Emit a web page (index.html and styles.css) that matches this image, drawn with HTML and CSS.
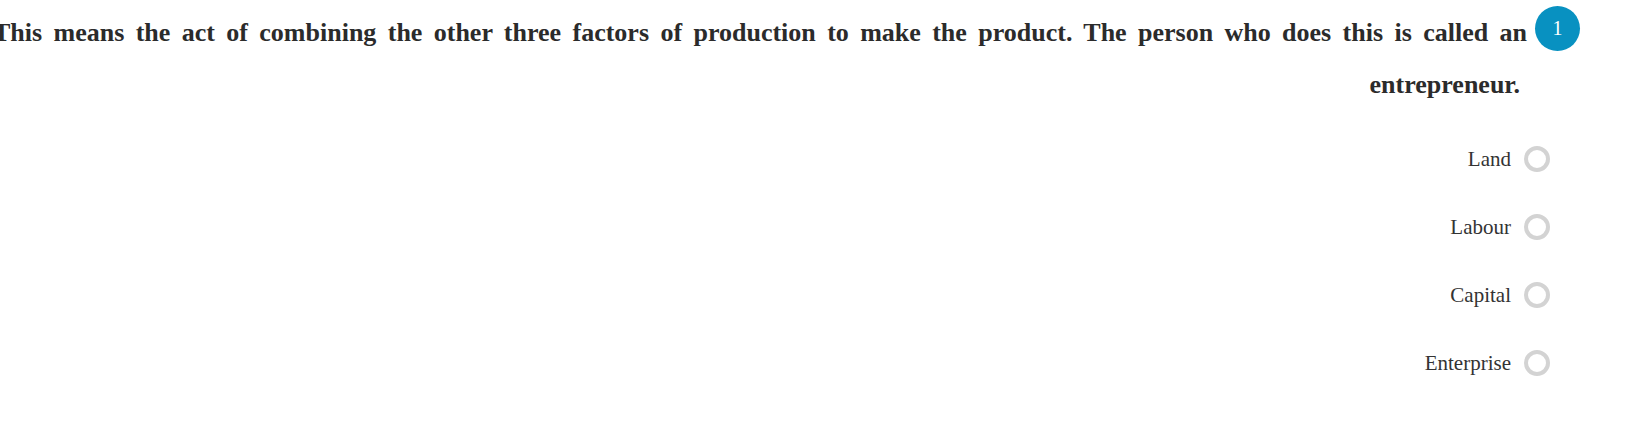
FILE: index.html
```html
<!DOCTYPE html>
<html lang="en">
<head>
<meta charset="utf-8">
<title>Question 1</title>
<link rel="stylesheet" href="styles.css">
</head>
<body>
<div class="question">
  <div class="q-head">
    <p class="q-text">This means the act of combining the other three factors of production to make the product. The person who does this is called an <span class="q-end">entrepreneur.</span></p>
    <span class="badge">1</span>
  </div>
  <ul class="options">
    <li class="option"><span class="label">Land</span><span class="radio"></span></li>
    <li class="option"><span class="label">Labour</span><span class="radio"></span></li>
    <li class="option"><span class="label">Capital</span><span class="radio"></span></li>
    <li class="option"><span class="label">Enterprise</span><span class="radio"></span></li>
  </ul>
</div>
</body>
</html>
```

FILE: styles.css
```css
html, body {
  margin: 0;
  padding: 0;
  background: #ffffff;
}

body {
  font-family: "Liberation Serif", "Times New Roman", serif;
  color: #333333;
  overflow: hidden;
}

.question {
  width: 1635px;
}

.q-head {
  display: flex;
  align-items: flex-start;
  margin-left: -7px;
  padding-right: 55px;
  gap: 8px;
}

.q-text {
  flex: 1;
  margin: 7px 0 0 0;
  font-size: 26px;
  font-weight: bold;
  line-height: 52px;
  text-align: justify;
  text-align-last: right;
  color: #2b2b2b;
}

.q-end {
  padding-right: 7px;
}

.badge {
  flex: 0 0 45px;
  width: 45px;
  height: 45px;
  margin-top: 6px;
  border-radius: 50%;
  background: #0891c1;
  color: #ffffff;
  font-size: 20px;
  display: flex;
  align-items: center;
  justify-content: center;
}

.options {
  list-style: none;
  margin: 14px 0 0 0;
  padding: 0 85px 0 0;
  display: flex;
  flex-direction: column;
  align-items: flex-end;
}

.option {
  height: 68px;
  display: flex;
  align-items: center;
  gap: 13px;
}

.label {
  font-size: 21px;
  line-height: 26px;
  color: #333333;
}

.radio {
  width: 18px;
  height: 18px;
  border: 4px solid #d3d3d3;
  border-radius: 50%;
  box-sizing: content-box;
}
```
